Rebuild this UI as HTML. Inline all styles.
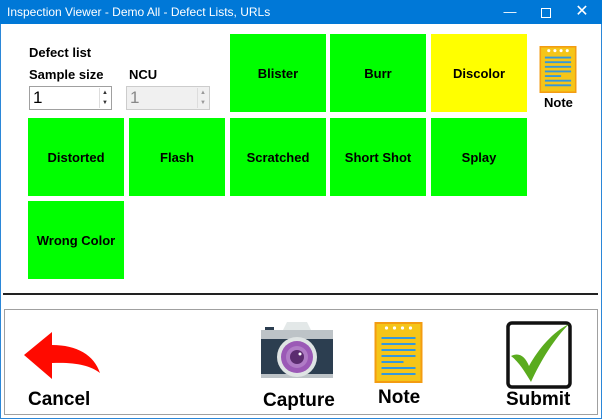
<!DOCTYPE html>
<html><head><meta charset="utf-8"><style>
*{margin:0;padding:0;box-sizing:border-box}
body{width:602px;height:419px;overflow:hidden;background:#fff;font-family:"Liberation Sans",Arial,sans-serif;position:relative}
.win{position:absolute;left:0;top:0;width:602px;height:419px;border:1px solid #2b87d8;border-top:none}
.title{position:absolute;left:0;top:0;width:602px;height:24px;background:#0078d7;color:#fff;font-size:12px;line-height:24px;padding-left:7px}
.ctl{position:absolute;top:0;height:24px;color:#fff;font-size:13px;line-height:24px;text-align:center;width:30px}
.lbl{position:absolute;font-weight:bold;font-size:13px;color:#000}
.spin{position:absolute;height:24px;border:1px solid #a0a0a0;background:#fff;font-size:17px;line-height:22px;padding-left:3px}
.spin .ar{position:absolute;right:1px;top:1px;width:11px;height:20px;border-left:1px solid #ddd;font-size:6px;line-height:10px;text-align:center;color:#333}
.b{position:absolute;width:96px;height:78px;background:#00ff00;font-weight:bold;font-size:13px;display:flex;align-items:center;justify-content:center}
.big{position:absolute;font-weight:bold;font-size:19px;top:389px}
</style></head><body>
<div class="win"></div>
<div class="title">Inspection Viewer - Demo All - Defect Lists, URLs</div>
<div class="ctl" style="left:495px">&#8212;</div>
<div class="ctl" style="left:531px"><span style="display:inline-block;width:10px;height:10px;border:1px solid #fff;vertical-align:middle"></span></div>
<div class="ctl" style="left:567px;font-size:16px">&#10005;</div>

<div class="lbl" style="left:29px;top:45px">Defect list</div>
<div class="lbl" style="left:29px;top:67px">Sample size</div>
<div class="lbl" style="left:129px;top:67px">NCU</div>
<div class="spin" style="left:29px;top:86px;width:83px;color:#000">1<div class="ar">▲<br>▼</div></div>
<div class="spin" style="left:126px;top:86px;width:84px;color:#888;background:#f0f0f0;border-color:#ccc">1<div class="ar" style="color:#999">▲<br>▼</div></div>

<div class="b" style="left:230px;top:34px">Blister</div>
<div class="b" style="left:330px;top:34px">Burr</div>
<div class="b" style="left:431px;top:34px;background:#ffff00">Discolor</div>
<div class="b" style="left:28px;top:118px">Distorted</div>
<div class="b" style="left:129px;top:118px">Flash</div>
<div class="b" style="left:230px;top:118px">Scratched</div>
<div class="b" style="left:330px;top:118px">Short Shot</div>
<div class="b" style="left:431px;top:118px">Splay</div>
<div class="b" style="left:28px;top:201px">Wrong Color</div>

<svg style="position:absolute;left:539px;top:46px" width="38" height="47" viewBox="0 0 48 61">
<rect x="1" y="1" width="46" height="59" fill="#f5c518" stroke="#f39c12" stroke-width="2"/>
<g fill="#fff"><circle cx="12" cy="6" r="2"/><circle cx="20" cy="6" r="2"/><circle cx="28" cy="6" r="2"/><circle cx="36" cy="6" r="2"/></g>
<g stroke="#3498db" stroke-width="2.5"><line x1="7" y1="15" x2="41" y2="15"/><line x1="7" y1="21" x2="41" y2="21"/><line x1="7" y1="27" x2="41" y2="27"/><line x1="7" y1="33" x2="41" y2="33"/><line x1="7" y1="39" x2="28" y2="39"/><line x1="7" y1="45" x2="41" y2="45"/><line x1="7" y1="51" x2="41" y2="51"/></g></svg>
<div class="lbl" style="left:544px;top:95px">Note</div>

<div style="position:absolute;left:3px;top:293px;width:595px;height:2px;background:#222"></div>
<div style="position:absolute;left:4px;top:309px;width:594px;height:106px;border:1px solid #a0a0a0"></div>

<svg style="position:absolute;left:22px;top:330px" width="80" height="55" viewBox="0 0 80 55">
<path d="M2 25 L30 2 L30 15 C55 15 72 25 78 43 C68 35 52 32 30 33 L30 49 Z" fill="#ff0a00"/></svg>
<div class="big" style="left:28px">Cancel</div>

<svg style="position:absolute;left:260px;top:322px" width="74" height="58" viewBox="0 0 74 58">
<path d="M23 8 L27 0 L47 0 L51 8 Z" fill="#e3e8e8"/>
<rect x="5" y="5" width="9" height="4" fill="#2c3e50"/>
<rect x="1" y="8" width="72" height="48" fill="#2c3e50"/>
<rect x="1" y="8" width="72" height="9" fill="#bdc3c7"/>
<rect x="1" y="52" width="72" height="4" fill="#bdc3c7"/>
<circle cx="37" cy="35" r="20" fill="#dfe4e4"/>
<circle cx="37" cy="35" r="16" fill="#9b59b6"/>
<circle cx="37" cy="35" r="11" fill="#b07cc6"/>
<circle cx="37" cy="35" r="7" fill="#5b2c6f"/>
<circle cx="40" cy="32" r="1.5" fill="#fff"/></svg>
<div class="big" style="left:263px;top:390px">Capture</div>

<svg style="position:absolute;left:374px;top:322px" width="49" height="61" viewBox="0 0 48 61">
<rect x="1" y="1" width="46" height="59" fill="#f5c518" stroke="#f39c12" stroke-width="2"/>
<g fill="#fff"><circle cx="12" cy="6" r="1.6"/><circle cx="20" cy="6" r="1.6"/><circle cx="28" cy="6" r="1.6"/><circle cx="36" cy="6" r="1.6"/></g>
<g stroke="#3498db" stroke-width="2"><line x1="7" y1="16" x2="41" y2="16"/><line x1="7" y1="22" x2="41" y2="22"/><line x1="7" y1="28" x2="41" y2="28"/><line x1="7" y1="34" x2="41" y2="34"/><line x1="7" y1="40" x2="29" y2="40"/><line x1="7" y1="46" x2="41" y2="46"/><line x1="7" y1="52" x2="41" y2="52"/></g></svg>
<div class="big" style="left:378px;top:387px">Note</div>

<svg style="position:absolute;left:505px;top:320px" width="68" height="70" viewBox="0 0 68 70">
<rect x="3" y="3" width="62" height="64" rx="4" fill="none" stroke="#111" stroke-width="3.5"/>
<path d="M6 36 C14 32 20 36 24 46 C34 28 48 12 64 4 C50 18 36 40 26 62 C20 52 14 42 6 36 Z" fill="#5aab1e"/></svg>
<div class="big" style="left:506px;top:389px">Submit</div>
</body></html>
